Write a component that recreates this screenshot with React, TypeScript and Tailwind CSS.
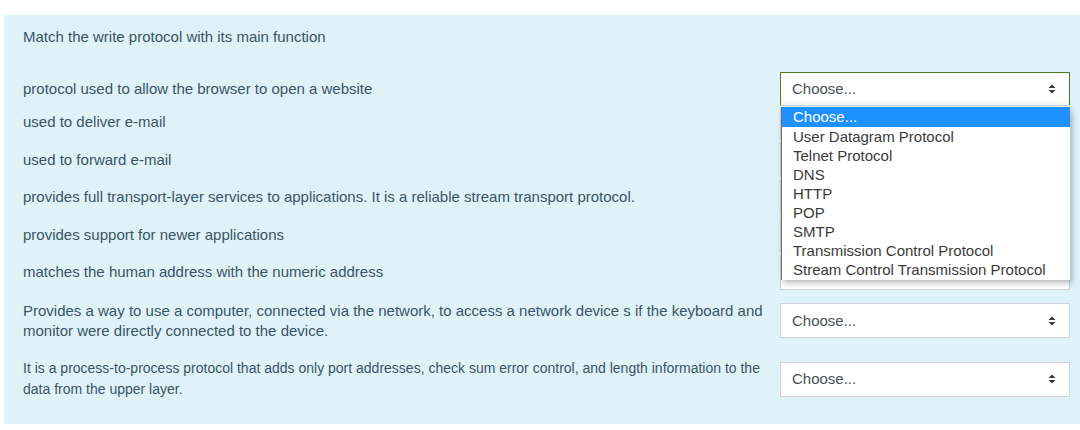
import React from 'react';

const stems = [
  { text: 'protocol used to allow the browser to open a website', h: 'h-[28.5px]', cls: 'text-[15px]' },
  { text: 'used to deliver e-mail', h: 'h-[37.5px]', cls: 'text-[15px]' },
  { text: 'used to forward e-mail', h: 'h-[37.5px]', cls: 'text-[15px]' },
  { text: 'provides full transport-layer services to applications. It is a reliable stream transport protocol.', h: 'h-[37.5px]', cls: 'text-[15px]' },
  { text: 'provides support for newer applications', h: 'h-[37.5px]', cls: 'text-[15px]' },
  { text: 'matches the human address with the numeric address', h: 'h-[37.5px]', cls: 'text-[15px]' },
  {
    text: 'Provides a way to use a computer, connected via the network, to access a network device s if the keyboard and monitor were directly connected to the device.',
    h: 'h-[59.5px]',
    cls: 'text-[15px] leading-[20px]',
  },
  {
    text: 'It is a process-to-process protocol that adds only port addresses, check sum error control, and length information to the data from the upper layer.',
    h: 'h-[57.5px]',
    cls: 'text-[14px] leading-[21px]',
  },
];

const options = [
  'Choose...',
  'User Datagram Protocol',
  'Telnet Protocol',
  'DNS',
  'HTTP',
  'POP',
  'SMTP',
  'Transmission Control Protocol',
  'Stream Control Transmission Protocol',
];

const Arrows = () => (
  <svg width="8" height="10" viewBox="0 0 8 10" className="shrink-0">
    <path d="M4 0.5 L7.5 4 L0.5 4 Z" fill="#373a3c" />
    <path d="M0.5 6 L7.5 6 L4 9.5 Z" fill="#373a3c" />
  </svg>
);

const Select = ({ focused }: { focused?: boolean }) => (
  <div
    className={`h-[35px] w-[290px] flex items-center justify-between pl-[11px] pr-[13px] bg-white border text-[15px] text-[#495057] ${
      focused ? 'border-[#4d7c1f] shadow-[inset_0_-6px_8px_-6px_rgba(0,0,0,0.12)]' : 'border-[#ced4da]'
    }`}
  >
    <span>Choose...</span>
    <Arrows />
  </div>
);

export default function App() {
  return (
    <div className="w-[1080px] h-[430px] bg-white pt-[15px] overflow-hidden font-['Liberation_Sans',Arial,sans-serif]">
      <div className="relative ml-[4px] h-[409px] bg-[#def2f8] pl-[19px] pr-[10px] pt-[12px] text-[#3a5566]">
        <p className="text-[15px] leading-[20px]">Match the write protocol with its main function</p>

        <div className="mt-[28px] grid grid-cols-[1fr_290px] gap-x-[12px]">
          {stems.map((s, i) => (
            <React.Fragment key={i}>
              <div className={`${s.h} flex items-center ${s.cls}`}>
                <span>{s.text}</span>
              </div>
              <div className={`${s.h} flex items-center`}>
                <Select focused={i === 0} />
              </div>
            </React.Fragment>
          ))}
        </div>

        {/* open option list of the first select */}
        <div className="absolute left-[777px] top-[92px] w-[289px] bg-white border-l border-l-[#6f6f6f] shadow-[2px_3px_6px_rgba(0,0,0,0.28)] pb-[1px] text-[15px] text-[#3a3a3a]">
          {options.map((o, i) => (
            <div
              key={o}
              className={`h-[19px] leading-[19px] pl-[11px] whitespace-nowrap ${
                i === 0 ? 'bg-[#1e90ff] text-white h-[20px] leading-[20px]' : ''
              }`}
            >
              {o}
            </div>
          ))}
        </div>
      </div>
    </div>
  );
}
